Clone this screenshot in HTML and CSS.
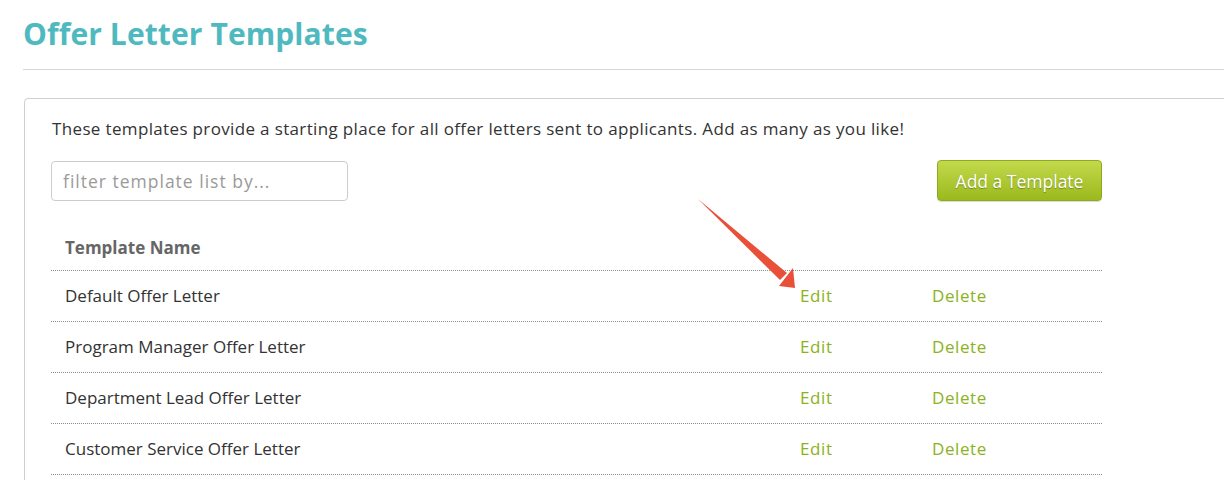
FILE: index.html
```html
<!DOCTYPE html>
<html>
<head>
<meta charset="utf-8">
<link rel="stylesheet" href="styles.css">
</head>
<body>
<div class="page">
  <header class="page-head">
    <h1 class="title">Offer Letter Templates</h1>
  </header>
  <section class="card">
    <p class="intro">These templates provide a starting place for all offer letters sent to applicants. Add as many as you like!</p>
    <div class="toolbar">
      <input class="filter" type="text" placeholder="filter template list by...">
      <button class="add-btn">Add a Template</button>
    </div>
    <div class="table">
      <div class="row head">
        <div class="cell name">Template Name</div>
        <div class="cell"></div>
        <div class="cell"></div>
      </div>
      <div class="row">
        <div class="cell name">Default Offer Letter</div>
        <div class="cell"><a class="link">Edit</a></div>
        <div class="cell"><a class="link">Delete</a></div>
      </div>
      <div class="row">
        <div class="cell name">Program Manager Offer Letter</div>
        <div class="cell"><a class="link">Edit</a></div>
        <div class="cell"><a class="link">Delete</a></div>
      </div>
      <div class="row">
        <div class="cell name">Department Lead Offer Letter</div>
        <div class="cell"><a class="link">Edit</a></div>
        <div class="cell"><a class="link">Delete</a></div>
      </div>
      <div class="row">
        <div class="cell name">Customer Service Offer Letter</div>
        <div class="cell"><a class="link">Edit</a></div>
        <div class="cell"><a class="link">Delete</a></div>
      </div>
    </div>
  </section>
  <svg class="arrow" width="120" height="110" viewBox="0 0 120 110">
    <polygon points="0,0 89,74 82,81" fill="#e8503a"/>
    <polygon points="81,87 97,89 95,69" fill="#e8503a"/>
  </svg>
</div>
</body>
</html>
```
FILE: styles.css
```css
html, body {
  margin: 0;
  padding: 0;
  background: #fff;
  overflow: hidden;
}
body {
  font-family: "Open Sans", "Liberation Sans", sans-serif;
  color: #333;
}
.page {
  position: relative;
  padding-left: 23px;
  height: 480px;
  overflow: hidden;
}
.page-head {
  border-bottom: 1px solid #d6d6d6;
  box-sizing: border-box;
  height: 70px;
}
.title {
  margin: 0;
  padding-top: 13px;
  font-size: 30px;
  line-height: 42px;
  font-weight: 700;
  color: #4fb9c0;
  letter-spacing: 0.1px;
}
.card {
  margin-top: 28px;
  margin-left: 1px;
  width: 1260px;
  border: 1px solid #cfcfcf;
  border-radius: 4px;
  padding: 19px 0 0 26px;
  box-sizing: border-box;
  height: 420px;
}
.intro {
  margin: 0;
  font-size: 17px;
  line-height: 22px;
  letter-spacing: 0.35px;
  padding-left: 1px;
}
.toolbar {
  width: 1051px;
  margin-top: 20px;
  display: flex;
  justify-content: space-between;
  align-items: center;
}
.filter {
  width: 297px;
  height: 40px;
  box-sizing: border-box;
  border: 1px solid #cccccc;
  border-radius: 4px;
  padding: 0 11px;
  font-family: inherit;
  font-size: 17.5px;
  letter-spacing: 1px;
  color: #333;
  outline: none;
}
.filter::placeholder {
  color: #9a9a9a;
}
.add-btn {
  width: 165px;
  height: 41px;
  border: 1px solid #8ea91b;
  border-radius: 4px;
  background: linear-gradient(#c3d94c, #9bb91d);
  color: #fff;
  font-family: inherit;
  font-size: 17.5px;
  text-shadow: 0 1px 1px rgba(0,0,0,0.3);
  box-shadow: 0 1px 1px rgba(0,0,0,0.15);
  padding: 0;
}
.table {
  width: 1051px;
  margin-top: 26px;
}
.row {
  display: grid;
  grid-template-columns: 749px 132px 1fr;
  height: 51px;
  box-sizing: border-box;
  border-bottom: 1px dotted #8c8c8c;
  align-items: center;
  padding-bottom: 2px;
  font-size: 17px;
}
.row.head {
  height: 44px;
  font-weight: 700;
  color: #666;
}
.cell.name {
  padding-left: 14px;
}
.link {
  color: #8cb221;
  letter-spacing: 0.6px;
  cursor: pointer;
}
.arrow {
  position: absolute;
  left: 698px;
  top: 199px;
}
```
